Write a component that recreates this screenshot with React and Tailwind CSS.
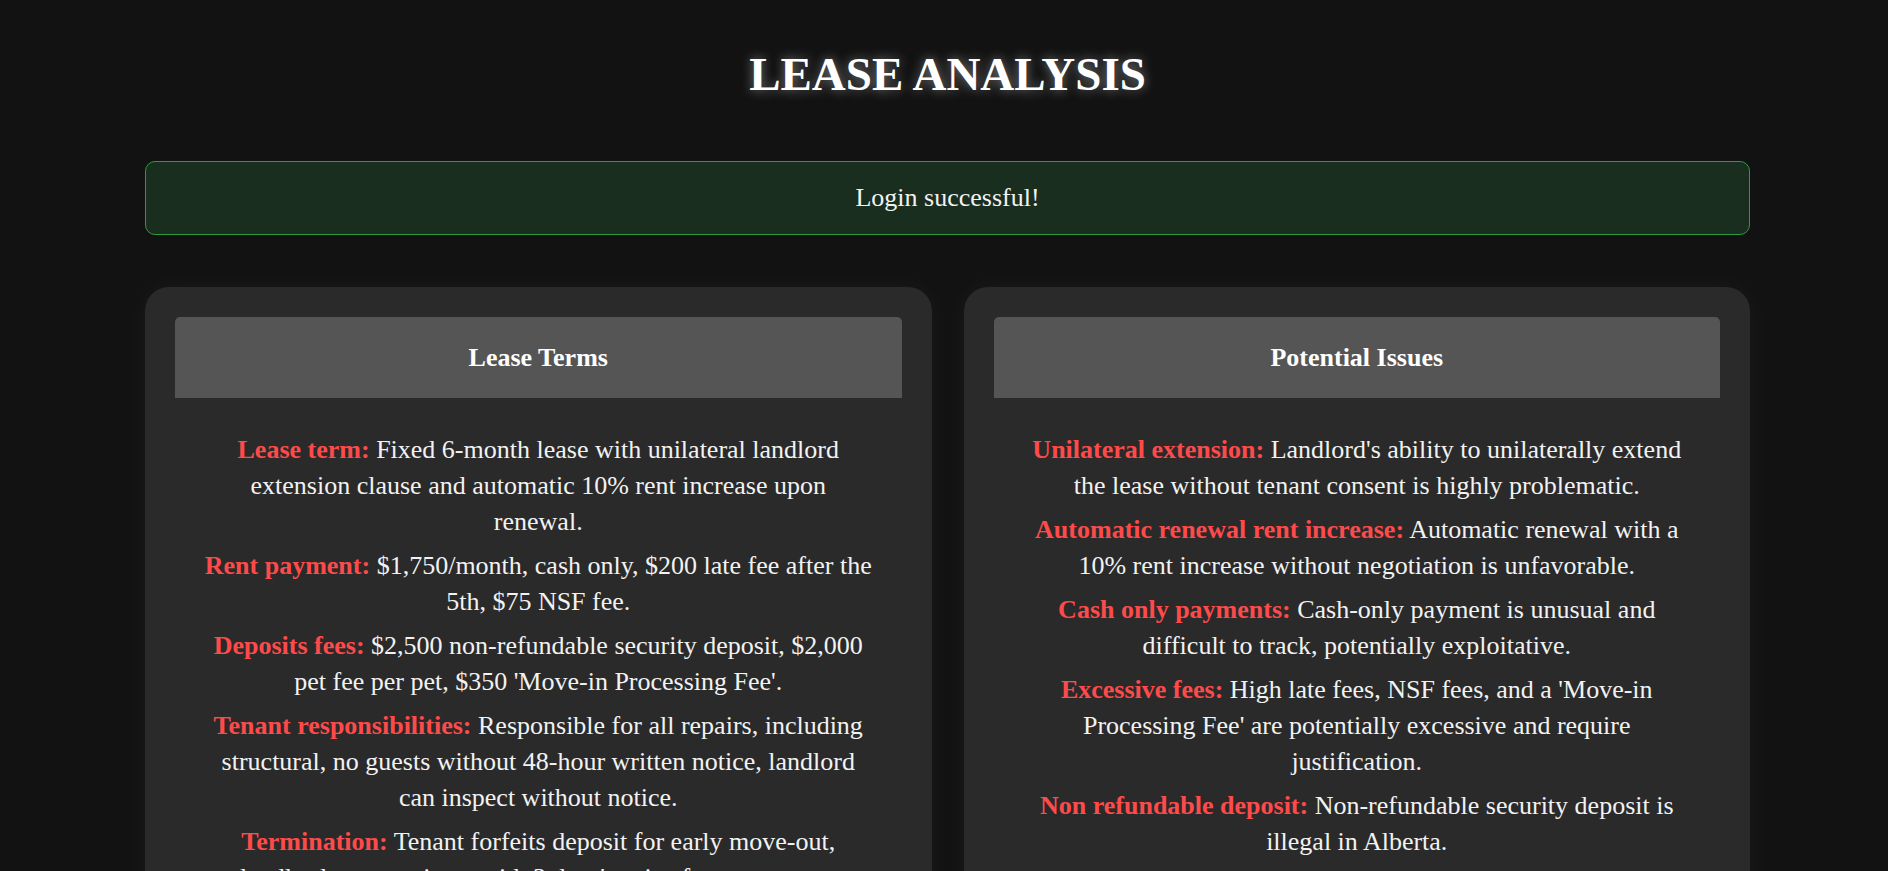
const terms = [
  { label: 'Lease term:', text: 'Fixed 6-month lease with unilateral landlord extension clause and automatic 10% rent increase upon renewal.' },
  { label: 'Rent payment:', text: '$1,750/month, cash only, $200 late fee after the 5th, $75 NSF fee.' },
  { label: 'Deposits fees:', text: "$2,500 non-refundable security deposit, $2,000 pet fee per pet, $350 'Move-in Processing Fee'." },
  { label: 'Tenant responsibilities:', text: 'Responsible for all repairs, including structural, no guests without 48-hour written notice, landlord can inspect without notice.' },
  { label: 'Termination:', text: "Tenant forfeits deposit for early move-out, landlord can terminate with 3 days' notice for any reason." },
]

const issues = [
  { label: 'Unilateral extension:', text: "Landlord's ability to unilaterally extend the lease without tenant consent is highly problematic." },
  { label: 'Automatic renewal rent increase:', text: 'Automatic renewal with a 10% rent increase without negotiation is unfavorable.' },
  { label: 'Cash only payments:', text: 'Cash-only payment is unusual and difficult to track, potentially exploitative.' },
  { label: 'Excessive fees:', text: "High late fees, NSF fees, and a 'Move-in Processing Fee' are potentially excessive and require justification." },
  { label: 'Non refundable deposit:', text: 'Non-refundable security deposit is illegal in Alberta.' },
]

function Card({ title, items }) {
  return (
    <div className="bg-[#2a2a2a] rounded-[24px] p-[30px] shadow-[0_0_30px_rgba(255,255,255,0.04)]">
      {/* Header */}
      <div className="h-[81px] bg-[#555555] rounded-t-[5px] flex items-center justify-center">
        <h2 className="text-[26px] font-bold text-white">{title}</h2>
      </div>

      <div className="pt-[34px] px-[29px] flex flex-col gap-2">
        {items.map(it => (
          <p key={it.label} className="text-center text-[26px] leading-[36px] text-[#f2f2f2]">
            <span className="font-bold text-[#ff4a4a]">{it.label}</span> {it.text}
          </p>
        ))}
      </div>
    </div>
  )
}

export default function App() {
  return (
    <div className="min-h-screen bg-[#121212] pt-[46px] pl-[145px] pr-[138px] font-['Liberation_Serif',serif] text-white">
      <h1 className="text-center text-[47px] leading-[56px] font-bold text-white mb-[59px] [text-shadow:0_0_12px_rgba(255,255,255,0.45)]">
        LEASE ANALYSIS
      </h1>

      <div className="bg-[#192e1f] border border-[#2d9a40] rounded-[10px] py-[18px] text-center text-[26px] leading-[36px] text-[#f2f2f2]">
        Login successful!
      </div>

      <div className="grid grid-cols-2 gap-8 mt-[52px] pb-10">
        <Card title="Lease Terms" items={terms} />
        <Card title="Potential Issues" items={issues} />
      </div>
    </div>
  )
}
